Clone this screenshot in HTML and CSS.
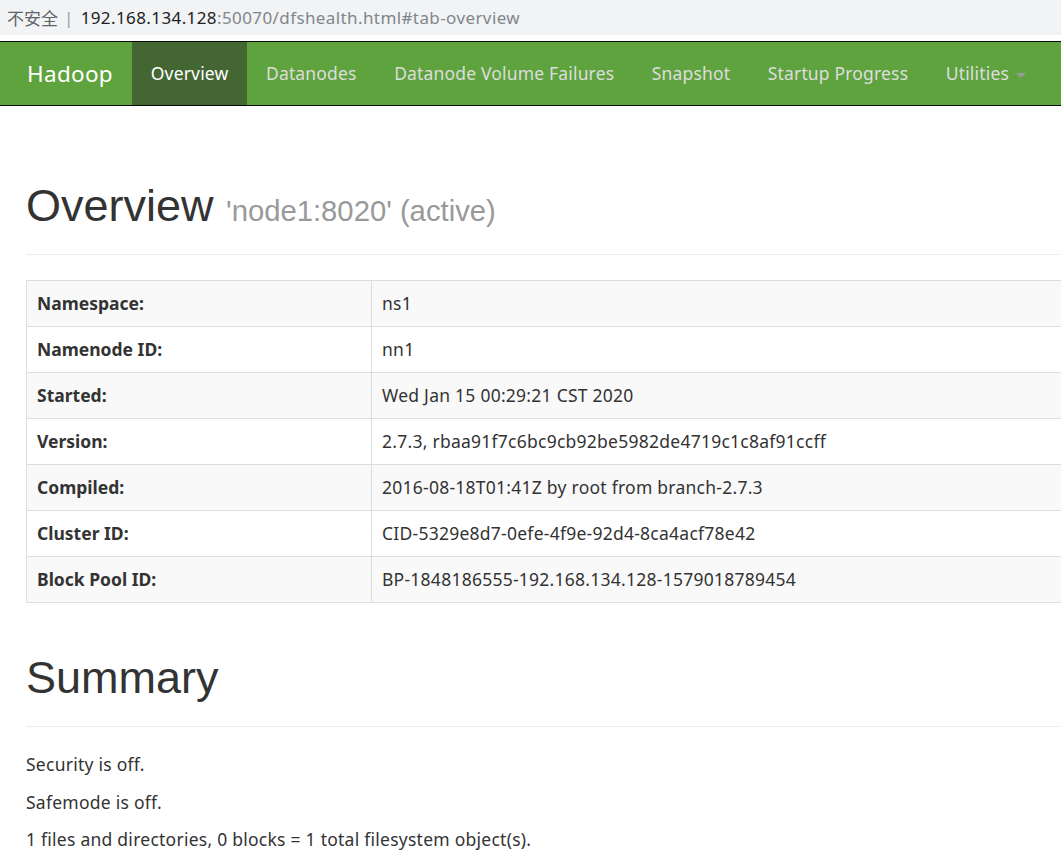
FILE: index.html
```html
<!DOCTYPE html>
<html>
<head>
<meta charset="utf-8">
<title>Namenode information</title>
<link rel="stylesheet" href="styles.css">
</head>
<body>
<div class="urlbar">
  <span class="insecure">不安全</span><span class="sep">|</span><span class="host">192.168.134.128</span><span class="path">:50070/dfshealth.html#tab-overview</span>
</div>
<div class="urlgap"></div>
<nav class="navbar">
  <a class="brand">Hadoop</a>
  <ul class="nav">
    <li class="active"><a>Overview</a></li>
    <li><a>Datanodes</a></li>
    <li><a>Datanode Volume Failures</a></li>
    <li><a>Snapshot</a></li>
    <li><a>Startup Progress</a></li>
    <li><a>Utilities <span class="caret"></span></a></li>
  </ul>
</nav>
<main class="container">
  <div class="page-header first">
    <h1>Overview <small>'node1:8020' (active)</small></h1>
  </div>
  <table class="info">
    <tr><th>Namespace:</th><td>ns1</td></tr>
    <tr><th>Namenode ID:</th><td>nn1</td></tr>
    <tr><th>Started:</th><td>Wed Jan 15 00:29:21 CST 2020</td></tr>
    <tr><th>Version:</th><td>2.7.3, rbaa91f7c6bc9cb92be5982de4719c1c8af91ccff</td></tr>
    <tr><th>Compiled:</th><td>2016-08-18T01:41Z by root from branch-2.7.3</td></tr>
    <tr><th>Cluster ID:</th><td>CID-5329e8d7-0efe-4f9e-92d4-8ca4acf78e42</td></tr>
    <tr><th>Block Pool ID:</th><td>BP-1848186555-192.168.134.128-1579018789454</td></tr>
  </table>
  <div class="page-header">
    <h1>Summary</h1>
  </div>
  <p>Security is off.</p>
  <p>Safemode is off.</p>
  <p>1 files and directories, 0 blocks = 1 total filesystem object(s).</p>
</main>
</body>
</html>
```
FILE: styles.css
```css
html, body {
  margin: 0;
  padding: 0;
  overflow: hidden;
}
body {
  font-family: "Noto Sans", "Open Sans", sans-serif;
  font-size: 17.5px;
  line-height: 25px;
  letter-spacing: 0.25px;
  color: #333;
  background: #fff;
}
.urlbar {
  height: 35px;
  background: #f1f3f4;
  display: flex;
  align-items: center;
  padding-left: 7px;
  font-size: 17px;
  white-space: nowrap;
}
.insecure {
  color: #5f6368;
  font-family: "Noto Sans CJK SC", sans-serif;
  letter-spacing: 0;
}
.sep {
  color: #9aa0a6;
  margin: 0 7px 0 6px;
}
.host { color: #202124; letter-spacing: 0.4px; }
.path { color: #80868b; letter-spacing: 0.4px; }
.urlgap {
  height: 6px;
  background: #fff;
}
.navbar {
  display: flex;
  align-items: stretch;
  background: #5fa33e;
  border-top: 1px solid #080808;
  border-bottom: 1px solid #080808;
  height: 63px;
  margin-bottom: 25px;
}
.brand {
  color: #fff;
  font-size: 22.5px;
  line-height: 25px;
  letter-spacing: 0.3px;
  padding: 19px 19px 19px 27px;
}
.nav {
  list-style: none;
  margin: 0;
  padding: 0;
  display: flex;
  letter-spacing: 0.17px;
}
.nav li a {
  display: block;
  color: #ddd;
  padding: 19px 18.75px;
  line-height: 25px;
}
.nav li.active a {
  background: #436633;
  color: #fff;
}
.caret {
  display: inline-block;
  width: 0;
  height: 0;
  margin-left: 2px;
  vertical-align: middle;
  border-top: 5px solid #999;
  border-left: 5px solid transparent;
  border-right: 5px solid transparent;
}
.container {
  padding: 0 0 0 26px;
}
.page-header {
  margin: 50px 0 25px;
  padding-bottom: 11px;
  border-bottom: 1px solid #eee;
}
.page-header.first {
  margin-top: 75px;
}
h1 {
  font-family: "Liberation Sans", Arial, sans-serif;
  font-weight: 500;
  font-size: 45px;
  line-height: 49.5px;
  letter-spacing: 0;
  margin: 0 0 12.5px;
  color: #333;
}
h1 small {
  font-size: 65%;
  line-height: 1;
  color: #999;
  font-weight: normal;
}
.info {
  border-collapse: collapse;
  width: calc(100% + 20px);
  margin-bottom: 25px;
  border: 1px solid #ddd;
}
.info th, .info td {
  border: 1px solid #ddd;
  padding: 10px;
  line-height: 25px;
  text-align: left;
  vertical-align: top;
}
.info th {
  width: 324px;
  font-weight: bold;
  letter-spacing: 0;
}
.info tr:nth-child(odd) {
  background: #f9f9f9;
}
p {
  margin: 0 0 12.5px;
}
```
